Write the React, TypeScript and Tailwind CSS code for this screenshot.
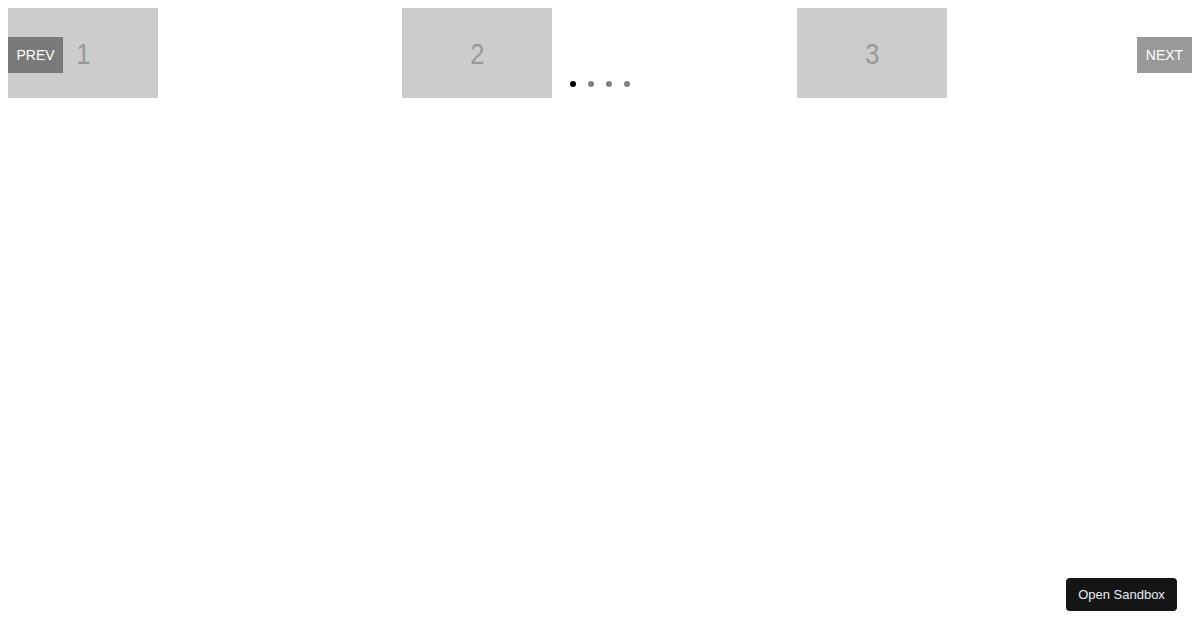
export default function App() {
  const slides = ["1", "2", "3"];
  return (
    <div className="min-h-[630px] bg-white" style={{ fontFamily: '"Liberation Sans", Arial, sans-serif' }}>
      <div className="relative mx-2 pt-2">
        <div className="grid grid-cols-[394px_395px_1fr]">
          {slides.map((s) => (
            <div key={s} className="flex h-[90px] w-[150px] items-center justify-center bg-[#cccccc] text-[30px] text-[#999999]">
              <span className="inline-block scale-x-85">{s}</span>
            </div>
          ))}
        </div>
        <button className="absolute left-0 top-[37px] flex h-9 w-[55px] items-center justify-center bg-[rgba(0,0,0,0.4)] text-sm text-white">
          PREV
        </button>
        <button className="absolute right-0 top-[37px] flex h-9 w-[55px] items-center justify-center bg-[rgba(0,0,0,0.4)] text-sm text-white">
          NEXT
        </button>
        <div className="absolute left-0 right-0 top-[81px] flex justify-center gap-3">
          <span className="h-1.5 w-1.5 rounded-full bg-black" />
          <span className="h-1.5 w-1.5 rounded-full bg-[#808080]" />
          <span className="h-1.5 w-1.5 rounded-full bg-[#808080]" />
          <span className="h-1.5 w-1.5 rounded-full bg-[#808080]" />
        </div>
      </div>
      <button className="fixed bottom-[19px] right-[23px] flex h-[33px] w-[111px] items-center justify-center rounded bg-[#151515] text-[13px] text-[#e6eef8]">
        Open Sandbox
      </button>
    </div>
  );
}
